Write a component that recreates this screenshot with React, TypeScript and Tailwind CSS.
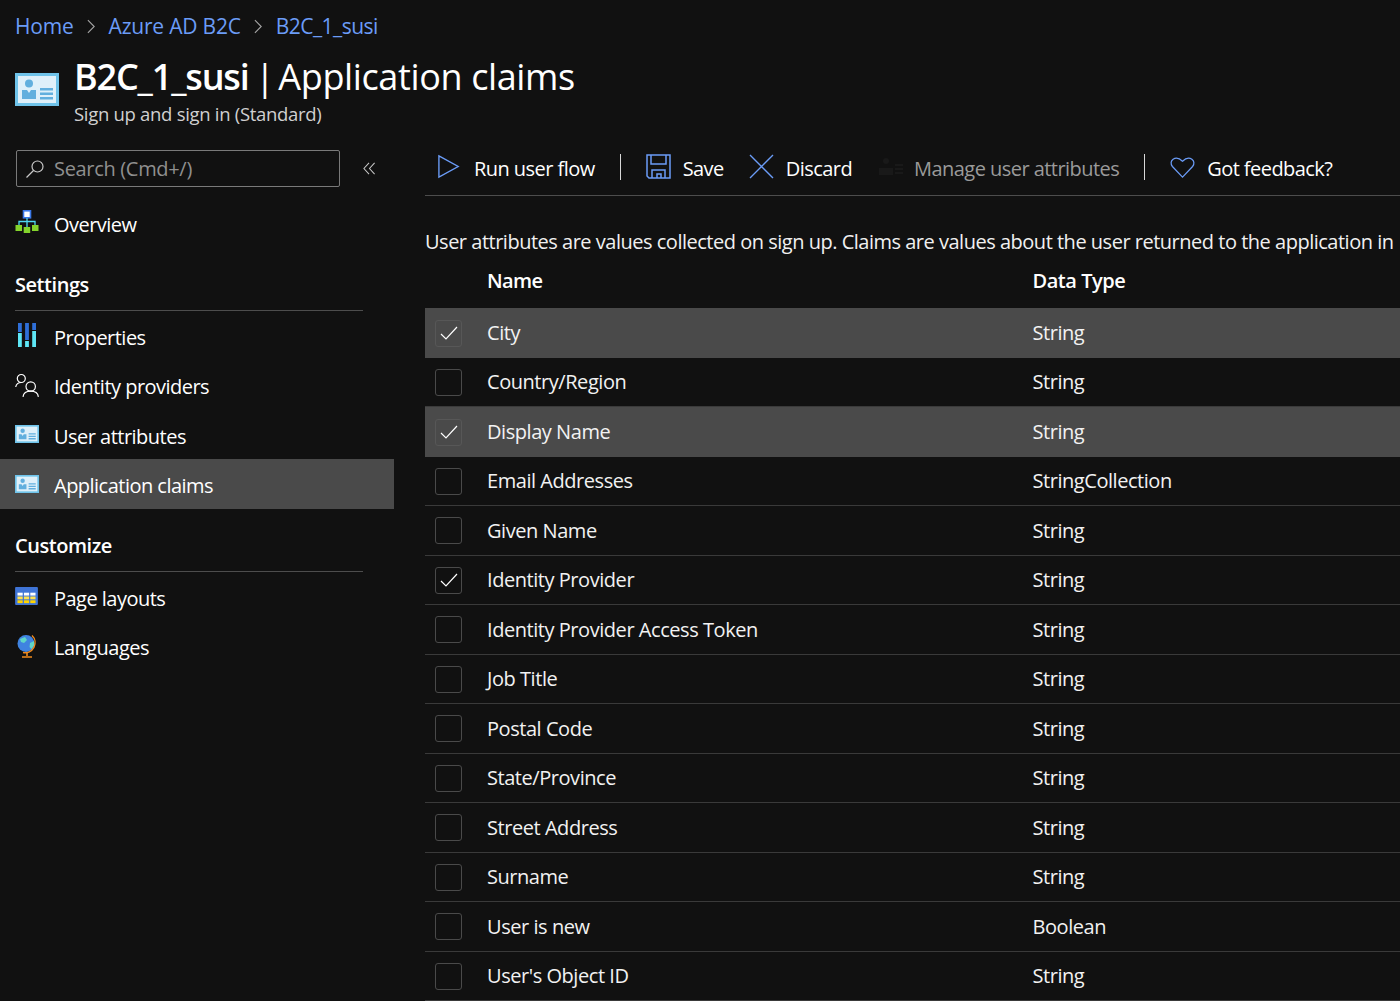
const font = "font-['Open_Sans','Noto_Sans',sans-serif]";

const rows = [
  { name: "City", type: "String", state: "selected" },
  { name: "Country/Region", type: "String" },
  { name: "Display Name", type: "String", state: "selected" },
  { name: "Email Addresses", type: "StringCollection" },
  { name: "Given Name", type: "String" },
  { name: "Identity Provider", type: "String", state: "checked" },
  { name: "Identity Provider Access Token", type: "String" },
  { name: "Job Title", type: "String" },
  { name: "Postal Code", type: "String" },
  { name: "State/Province", type: "String" },
  { name: "Street Address", type: "String" },
  { name: "Surname", type: "String" },
  { name: "User is new", type: "Boolean" },
  { name: "User's Object ID", type: "String" },
];

function CardIcon({ className }: { className: string }) {
  return (
    <svg viewBox="0 0 44 33" className={className}>
      <rect width="44" height="33" fill="#6fc3ea" />
      <rect x="3" y="3" width="38" height="27" fill="#dff0fa" />
      <circle cx="14" cy="10.500" r="4" fill="#62afde" />
      <path d="M7 17h5l2 3 2-3h5v9H7z" fill="#62afde" />
      <path d="M25 15h13v2.500H25zM25 19.500h13V22H25zM25 24h13v2.500H25z" fill="#62afde" />
    </svg>
  );
}

function OverviewIcon() {
  return (
    <svg viewBox="0 0 24 24" className="w-6 h-6">
      <rect x="8.500" y="0.800" width="7" height="7" fill="#fff" stroke="#3b78e7" strokeWidth="1.600" />
      <path d="M12 8v9M4 15v-3.500h16V15" stroke="#4fd8f0" strokeWidth="1.300" fill="none" />
      <rect x="0.500" y="15" width="6.500" height="6" fill="#84d42c" />
      <rect x="8.700" y="17" width="6.500" height="6" fill="#84d42c" />
      <rect x="17" y="15" width="6.500" height="6" fill="#84d42c" />
    </svg>
  );
}

function PropertiesIcon() {
  return (
    <svg viewBox="0 0 24 24" className="w-6 h-6">
      <rect x="3" y="0" width="3.800" height="9" fill="#2f6fd8" />
      <rect x="3" y="10" width="3.800" height="14" fill="#5ee6f5" />
      <rect x="10.100" y="0" width="3.800" height="17" fill="#2f6fd8" />
      <rect x="10.100" y="18" width="3.800" height="6" fill="#5ee6f5" />
      <rect x="17.200" y="0" width="3.800" height="7" fill="#2f6fd8" />
      <rect x="17.200" y="8" width="3.800" height="16" fill="#5ee6f5" />
    </svg>
  );
}

function PeopleIcon() {
  return (
    <svg viewBox="0 0 24 24" className="w-6 h-6" fill="none" stroke="#fff" strokeWidth="1.200">
      <circle cx="6.300" cy="5.500" r="4" />
      <path d="M0.700 14c.6-3 2.700-4.500 5.600-4.500" />
      <circle cx="15.700" cy="13.500" r="4.700" />
      <path d="M8 23.800c.5-3.800 3.500-5.600 7.700-5.600s7.200 1.800 7.700 5.600" />
    </svg>
  );
}

function LayoutIcon() {
  return (
    <svg viewBox="0 0 24 20" className="w-[23px] h-[19px]">
      <rect width="24" height="19" rx="1" fill="#3f74d6" />
      <rect x="2.500" y="6" width="5.500" height="3" fill="#fff" />
      <rect x="9.300" y="6" width="5.500" height="3" fill="#fff" />
      <rect x="16" y="6" width="5.500" height="3" fill="#fff" />
      <rect x="2.500" y="10" width="5.500" height="3" fill="#ffe14d" />
      <rect x="9.300" y="10" width="5.500" height="3" fill="#ffe14d" />
      <rect x="16" y="10" width="5.500" height="3" fill="#ffe14d" />
      <rect x="2.500" y="14" width="5.500" height="3" fill="#ffd400" />
      <rect x="9.300" y="14" width="5.500" height="3" fill="#ffd400" />
      <rect x="16" y="14" width="5.500" height="3" fill="#ffd400" />
    </svg>
  );
}

function GlobeIcon() {
  return (
    <svg viewBox="0 0 24 24" className="w-6 h-6">
      <circle cx="11" cy="9.500" r="8.500" fill="#3f83e0" />
      <path d="M5 5l5-2 2 3-3 3-3-1zM15 9l4-2 .5 4-3 4-2-2z" fill="#5fd6c8" />
      <path d="M17 1.500a10 10 0 0 1-9 17" fill="none" stroke="#f08a1d" strokeWidth="1.400" />
      <path d="M12 19v3M7 23h10" stroke="#f08a1d" strokeWidth="1.600" />
    </svg>
  );
}

function NavItem({ icon, label, active }: { icon: React.ReactNode; label: string; active?: boolean }) {
  return (
    <div className={`flex items-center h-[49.500px] w-[394px] pl-[15px] text-white tracking-[-0.52px] ${active ? "bg-[#4a4a4a]" : ""}`}>
      <div className="w-[39px] shrink-0 flex">{icon}</div>
      <span className="pt-[5px]">{label}</span>
    </div>
  );
}

function SectionHead({ label }: { label: string }) {
  return (
    <div className="w-[348px] ml-[15px] h-[39px] border-b border-[#4d4d4d] font-semibold text-white">
      {label}
    </div>
  );
}

function Check({ checked, selected }: { checked: boolean; selected: boolean }) {
  return (
    <div
      className={`w-[27px] h-[27px] rounded-[3px] border-[1.500px] flex items-center justify-center ${
        selected ? "border-[#575757]" : "border-[#4a4a4a]"
      }`}
    >
      {checked && (
        <svg viewBox="0 0 20 20" className="w-5 h-5" fill="none" stroke="#fff" strokeWidth="1.200">
          <path d="M2 11l5 5L18 4" />
        </svg>
      )}
    </div>
  );
}

export default function App() {
  return (
    <div className={`w-[1400px] h-[1001px] overflow-hidden bg-[#111111] text-[20px] leading-[26px] tracking-[-0.45px] ${font}`}>
      <div className="flex items-center h-[26px] ml-[15px] pt-[13px] box-content text-[21px] tracking-[-0.2px] text-[#6b9cf7]">
        <span>Home</span>
        <svg viewBox="0 0 10 16" className="w-[9px] h-[15px] mx-[13px]" fill="none" stroke="#a6a6a6" strokeWidth="1.200">
          <path d="M1 1l7 7-7 7" />
        </svg>
        <span>Azure AD B2C</span>
        <svg viewBox="0 0 10 16" className="w-[9px] h-[15px] mx-[13px]" fill="none" stroke="#a6a6a6" strokeWidth="1.200">
          <path d="M1 1l7 7-7 7" />
        </svg>
        <span className="tracking-[-0.55px]">B2C_1_susi</span>
      </div>

      <div className="flex items-start mt-[17px] ml-[15px] h-[70px]">
        <CardIcon className="w-[44px] h-[33px] mt-[17px]" />
        <div className="ml-[15px] -mt-[1px]">
          <div className="text-[36px] leading-[44px] tracking-[-0.37px] text-white">
            <span className="font-semibold tracking-[-1.17px]">B2C_1_susi</span>
            <span className="tracking-[-2.9px]"> | </span>
            Application claims
          </div>
          <div className="mt-[3px] text-[#d0d0d0] text-[18.500px] leading-[24px] tracking-[-0.3px]">Sign up and sign in (Standard)</div>
        </div>
      </div>

      <div className="flex">
        <aside className="w-[425px] shrink-0">
          <div className="flex items-center ml-[16px] mt-[24px]">
            <div className="w-[324px] h-[37px] rounded-[2px] border border-[#7a7a7a] flex items-center pl-[8px] text-[#8f8f8f] tracking-[-0.32px]">
              <svg viewBox="0 0 20 20" className="w-5 h-5" fill="none" stroke="#c8c8c8" strokeWidth="1.200">
                <circle cx="12.500" cy="7.500" r="5.500" />
                <path d="M8.500 11.500L1.500 18.500" />
              </svg>
              <span className="ml-[9px]">Search (Cmd+/)</span>
            </div>
            <svg viewBox="0 0 14 14" className="w-[13px] h-[13px] ml-[23px]" fill="none" stroke="#c8c8c8" strokeWidth="1.100">
              <path d="M6.500 1L1 7l5.500 6M12.500 1L7 7l5.500 6" />
            </svg>
          </div>
          <div className="mt-[10.500px]">
            <NavItem icon={<OverviewIcon />} label="Overview" />
          </div>
          <div className="mt-[24.500px]">
            <SectionHead label="Settings" />
          </div>
          <div>
            <NavItem icon={<PropertiesIcon />} label="Properties" />
            <NavItem icon={<PeopleIcon />} label="Identity providers" />
            <NavItem icon={<CardIcon className="w-[24px] h-[18px]" />} label="User attributes" />
            <NavItem icon={<CardIcon className="w-[24px] h-[18px]" />} label="Application claims" active />
          </div>
          <div className="mt-[24px]">
            <SectionHead label="Customize" />
          </div>
          <div>
            <NavItem icon={<LayoutIcon />} label="Page layouts" />
            <NavItem icon={<GlobeIcon />} label="Languages" />
          </div>
        </aside>

        <main className="flex-1 min-w-0">
          <div className="flex items-center h-[55px] mt-[15px] pt-[2px] border-b border-[#4d4d4d] text-white tracking-[-0.55px]">
            <svg viewBox="0 0 24 26" className="w-[22px] h-[25px] ml-[13px] -mt-[5px]" fill="none" stroke="#6b9cf7" strokeWidth="1.500">
              <path d="M1 1.500L22 13 1 24.500z" />
            </svg>
            <span className="ml-[14px]">Run user flow</span>
            <div className="w-px h-[26px] bg-[#d8d8d8] ml-[25px] -mt-[5px]" />
            <svg viewBox="0 0 25 25" className="w-[25px] h-[25px] ml-[25px] -mt-[5px]" fill="none" stroke="#6b9cf7" strokeWidth="1.500">
              <path d="M1 1h23v23H3l-2-2z" />
              <path d="M5 1v9h15V1M6 24v-8h13v8M11 24v-4h4v4" />
            </svg>
            <span className="ml-[12px]">Save</span>
            <svg viewBox="0 0 25 25" className="w-[25px] h-[25px] ml-[25px] -mt-[5px]" fill="none" stroke="#6b9cf7" strokeWidth="1.400">
              <path d="M1 1l23 23M24 1L1 24" />
            </svg>
            <span className="ml-[12px]">Discard</span>
            <svg viewBox="0 0 26 20" className="w-[26px] h-[20px] ml-[26px] -mt-[5px]" fill="#191919">
              <circle cx="8" cy="4" r="3" />
              <path d="M1 18v-7h14v7zM17 7h8v2h-8zM17 11h8v2h-8zM17 15h8v2h-8z" />
            </svg>
            <span className="ml-[10px] text-[#9a9a9a]">Manage user attributes</span>
            <div className="w-px h-[26px] bg-[#d8d8d8] ml-[25px] -mt-[5px]" />
            <svg viewBox="0 0 26 24" className="w-[25px] h-[24px] ml-[25px] -mt-[5px]" fill="none" stroke="#6b9cf7" strokeWidth="1.300">
              <path d="M13 22.500L2.500 11.500C-2 6 5.500-1.500 13 6c7.500-7.500 15 0 10.500 5.500z" />
            </svg>
            <span className="ml-[12px]">Got feedback?</span>
          </div>

          <div className="mt-[33px] whitespace-nowrap text-[#f0f0f0] tracking-[-0.49px]">
            User attributes are values collected on sign up. Claims are values about the user returned to the application in
          </div>
          <div className="flex items-center h-[53px] pb-[2px] font-semibold text-white">
            <span className="ml-[62px] w-[545.500px] tracking-[-0.6px]">Name</span>
            <span>Data Type</span>
          </div>
          <div className="flex flex-col">
            {rows.map((r) => (
              <div
                key={r.name}
                className={`flex items-center h-[49.500px] pt-[1px] shrink-0 text-[#f2f2f2] ${
                  r.state === "selected" ? "bg-[#4a4a4a]" : "border-b border-[#3a3a3a]"
                }`}
              >
                <div className="w-[62px] shrink-0 pl-[10px]">
                  <Check checked={!!r.state} selected={r.state === "selected"} />
                </div>
                <span className="w-[545.500px] shrink-0">{r.name}</span>
                <span>{r.type}</span>
              </div>
            ))}
          </div>
        </main>
      </div>
    </div>
  );
}
